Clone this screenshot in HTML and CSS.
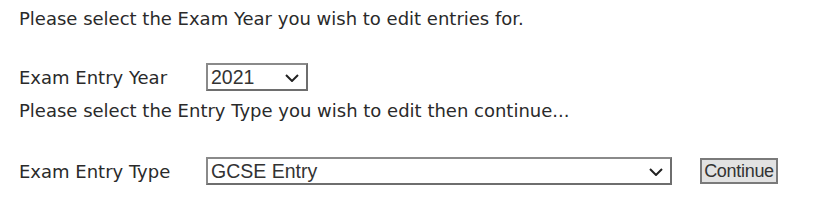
FILE: index.html
```html
<!DOCTYPE html>
<html>
<head>
<meta charset="utf-8">
<link rel="stylesheet" href="styles.css">
</head>
<body>
<div class="page">
  <p class="intro">Please select the Exam Year you wish to edit entries for.</p>
  <div class="row row-year">
    <span class="label">Exam Entry Year</span>
    <div class="select select-year">
      <span class="value">2021</span>
      <svg class="chev" width="14" height="8" viewBox="0 0 14 8"><path d="M1 1 L7 7 L13 1" fill="none" stroke="#222" stroke-width="2"/></svg>
    </div>
  </div>
  <p class="intro intro-2">Please select the Entry Type you wish to edit then continue...</p>
  <div class="row row-type">
    <span class="label">Exam Entry Type</span>
    <div class="select select-type">
      <span class="value">GCSE Entry</span>
      <svg class="chev" width="14" height="8" viewBox="0 0 14 8"><path d="M1 1 L7 7 L13 1" fill="none" stroke="#222" stroke-width="2"/></svg>
    </div>
    <button class="btn">Continue</button>
  </div>
</div>
</body>
</html>
```
FILE: styles.css
```css
html, body {
  margin: 0;
  padding: 0;
  background: #fff;
}
.page {
  display: flex;
  flex-direction: column;
  padding: 9px 0 0 19px;
  font-family: "DejaVu Sans", Verdana, sans-serif;
  font-size: 18px;
  color: #2a2a2a;
}
.intro {
  margin: 0;
  line-height: 20px;
  height: 20px;
}
.intro-2 {
  margin-top: 10px;
}
.row {
  display: flex;
  align-items: center;
  height: 28px;
}
.row-year {
  margin-top: 34px;
}
.row-type {
  margin-top: 36px;
}
.label {
  width: 187px;
  flex: none;
}
.select {
  position: relative;
  box-sizing: border-box;
  height: 28px;
  border: 2px solid #6e6e6e;
  border-top-color: #8a8a8a;
  border-left-color: #8a8a8a;
  background: #fff;
  font-family: "Liberation Sans", Arial, sans-serif;
  font-size: 19.5px;
  color: #333;
  display: flex;
  align-items: center;
  padding-left: 3px;
}
.select-year {
  width: 102px;
}
.select-type {
  width: 466px;
}
.chev {
  position: absolute;
  right: 7px;
  top: 9px;
}
.btn {
  margin-left: 28px;
  box-sizing: border-box;
  width: 78px;
  height: 26px;
  padding: 0;
  border: 2px solid #7a7a7a;
  background: #e2e2e2;
  font-family: "Liberation Sans", Arial, sans-serif;
  font-size: 18px;
  color: #333;
  letter-spacing: -0.3px;
}
```
